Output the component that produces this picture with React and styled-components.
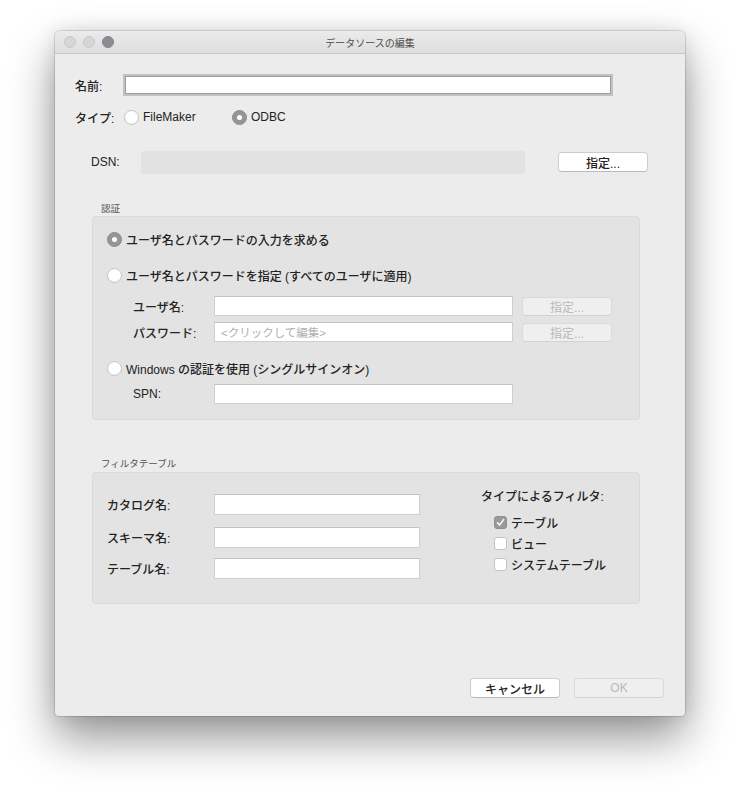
import React from 'react'
import styled, { createGlobalStyle, css } from 'styled-components'

const GlobalStyle = createGlobalStyle`
  html, body {
    margin: 0;
    background: #fff;
  }
  body {
    font-family: "Liberation Sans", "Noto Sans CJK JP", sans-serif;
    font-size: 12px;
    font-weight: 500;
    color: #222;
  }
`

const Page = styled.div`
  display: flex;
  justify-content: center;
  padding-top: 31px;
  height: 765px;
`
const Window = styled.div`
  width: 630px;
  height: 685px;
  display: flex;
  flex-direction: column;
  background: #ececec;
  border-radius: 5px 5px 4px 4px;
  box-shadow: 0 22px 46px rgba(0, 0, 0, 0.42), 0 0 0 1px rgba(0, 0, 0, 0.12), 0 0 18px rgba(0, 0, 0, 0.1);
  overflow: hidden;
`
const TitleBar = styled.div`
  height: 22px;
  flex: none;
  display: flex;
  align-items: center;
  position: relative;
  background: linear-gradient(#ebebeb, #dedede);
  border-bottom: 1px solid #c9c9c9;
`
const Lights = styled.div`
  display: flex;
  gap: 7px;
  padding-left: 9px;
`
const Light = styled.span`
  width: 12px;
  height: 12px;
  border-radius: 50%;
  box-sizing: border-box;
  background: ${p => (p.$dark ? '#8d8d91' : '#d6d6d6')};
  border: 1px solid ${p => (p.$dark ? '#85858a' : '#c8c8c8')};
`
const Title = styled.div`
  position: absolute;
  left: 0;
  right: 0;
  text-align: center;
  font-size: 10px;
  font-weight: 400;
  color: #4d4d4d;
  pointer-events: none;
`
const Body = styled.div`
  flex: 1;
  display: flex;
  flex-direction: column;
  padding: 20px 21px 18px 20px;
`
const Row = styled.div`
  display: flex;
  align-items: center;
  height: ${p => p.$h || 20}px;
  margin-top: ${p => p.$mt || 0}px;
  padding-left: ${p => p.$indent || 0}px;
  flex: none;
`
const Label = styled.span`
  width: ${p => p.$w}px;
  flex: none;
  white-space: nowrap;
`
const TextField = styled.div`
  box-sizing: border-box;
  flex: none;
  width: ${p => p.$w}px;
  height: ${p => p.$h || 20}px;
  background: #fff;
  border: 1px solid #cfcfcf;
  border-top-color: #c2c2c2;
  padding-left: 6px;
  display: flex;
  align-items: center;
  color: #b0b0b0;
  font-size: 11.5px;
  font-weight: 400;
  ${p => p.$focused && css`
    border: 1px solid #9d9d9d;
    box-shadow: 0 0 0 2px #c2c2c2;
    margin-left: 2px;
  `}
  ${p => p.$disabled && css`
    background: #e2e2e2;
    border: none;
    border-radius: 3px;
  `}
`
const Button = styled.div`
  box-sizing: border-box;
  flex: none;
  width: 90px;
  height: ${p => p.$h || 20}px;
  margin-left: ${p => p.$ml || 0}px;
  display: flex;
  align-items: center;
  justify-content: center;
  border-radius: 4px;
  background: ${p => (p.$disabled ? '#efefef' : '#fff')};
  border: 1px solid ${p => (p.$disabled ? '#dadada' : '#cdcdcd')};
  border-bottom-color: ${p => (p.$disabled ? '#d2d2d2' : '#b9b9b9')};
  color: ${p => (p.$disabled ? '#b9b9b9' : '#222')};
  font-size: 12px;
  font-weight: ${p => (p.$disabled ? 400 : 500)};
`
const Option = styled.label`
  display: flex;
  align-items: center;
  gap: 4px;
  width: ${p => (p.$w ? `${p.$w}px` : 'auto')};
  white-space: nowrap;
`
const Radio = styled.span`
  width: 15px;
  height: 15px;
  box-sizing: border-box;
  border-radius: 50%;
  flex: none;
  display: flex;
  align-items: center;
  justify-content: center;
  background: ${p => (p.$checked ? '#959595' : '#fff')};
  border: 1px solid ${p => (p.$checked ? '#8c8c8c' : '#c3c3c3')};
  box-shadow: ${p => (p.$checked ? 'none' : 'inset 0 -1px 1px rgba(0,0,0,0.04)')};
  &::after {
    content: '';
    width: 5px;
    height: 5px;
    border-radius: 50%;
    background: #fff;
    display: ${p => (p.$checked ? 'block' : 'none')};
  }
`
const Check = styled.span`
  width: 13px;
  height: 13px;
  box-sizing: border-box;
  border-radius: 3px;
  flex: none;
  display: flex;
  align-items: center;
  justify-content: center;
  background: ${p => (p.$checked ? '#9a9a9a' : '#fff')};
  border: 1px solid ${p => (p.$checked ? '#8f8f8f' : '#c3c3c3')};
`
const GroupTitle = styled.div`
  font-size: 9.5px;
  font-weight: 400;
  line-height: 12px;
  color: #505050;
  padding-left: 26px;
  margin-top: ${p => p.$mt}px;
`
const GroupBox = styled.div`
  margin: ${p => p.$mt || 1}px 0 0 17px;
  width: 548px;
  box-sizing: border-box;
  background: #e3e3e3;
  border: 1px solid #dadada;
  border-radius: 4px;
  padding: ${p => p.$pad};
  display: flex;
  flex-direction: ${p => p.$dir || 'column'};
`
const Column = styled.div`
  display: flex;
  flex-direction: column;
  margin-left: ${p => p.$ml || 0}px;
  margin-top: ${p => p.$mt || 0}px;
`
const FilterTitle = styled.div`
  line-height: 14px;
  height: 14px;
  margin-bottom: 8px;
`
const Footer = styled.div`
  margin-top: auto;
  display: flex;
  justify-content: flex-end;
  gap: 14px;
`

const Tick = () => (
  <svg width="9" height="9" viewBox="0 0 9 9">
    <path d="M1.5 4.8 L3.6 7 L7.6 1.6" fill="none" stroke="#fff" strokeWidth="1.5" strokeLinecap="round" strokeLinejoin="round" />
  </svg>
)

const CheckRow = ({ checked, children }) => (
  <Row $h={21} $indent={13}>
    <Option>
      <Check $checked={checked}>{checked && <Tick />}</Check>
      {children}
    </Option>
  </Row>
)

const App = () => (
  <>
    <GlobalStyle />
    <Page>
      <Window>
        <TitleBar>
          <Lights>
            <Light />
            <Light />
            <Light $dark />
          </Lights>
          <Title>データソースの編集</Title>
        </TitleBar>
        <Body>
          <Row $h={22}>
            <Label $w={48}>名前:</Label>
            <TextField $focused $w={486} $h={18} />
          </Row>
          <Row $mt={11}>
            <Label $w={49}>タイプ:</Label>
            <Option $w={108}><Radio />FileMaker</Option>
            <Option><Radio $checked />ODBC</Option>
          </Row>
          <Row $h={24} $mt={23} $indent={16}>
            <Label $w={50}>DSN:</Label>
            <TextField $disabled $w={384} $h={23} />
            <Button $ml={33}>指定...</Button>
          </Row>

          <GroupTitle $mt={29}>認証</GroupTitle>
          <GroupBox $pad="12px 0 15px 14px">
            <Row>
              <Option><Radio $checked />ユーザ名とパスワードの入力を求める</Option>
            </Row>
            <Row $mt={16}>
              <Option><Radio />ユーザ名とパスワードを指定 (すべてのユーザに適用)</Option>
            </Row>
            <Row $mt={11} $indent={26}>
              <Label $w={81}>ユーザ名:</Label>
              <TextField $w={299} />
              <Button $disabled $ml={9} $h={19}>指定...</Button>
            </Row>
            <Row $mt={6} $indent={26}>
              <Label $w={81}>パスワード:</Label>
              <TextField $w={299}>&lt;クリックして編集&gt;</TextField>
              <Button $disabled $ml={9} $h={19}>指定...</Button>
            </Row>
            <Row $mt={16}>
              <Option><Radio />Windows の認証を使用 (シングルサインオン)</Option>
            </Row>
            <Row $mt={6} $indent={26}>
              <Label $w={81}>SPN:</Label>
              <TextField $w={299} />
            </Row>
          </GroupBox>

          <GroupTitle $mt={38}>フィルタテーブル</GroupTitle>
          <GroupBox $mt={2} $dir="row" $pad="21px 0 24px 14px">
            <Column>
              <Row $h={21}>
                <Label $w={107}>カタログ名:</Label>
                <TextField $w={206} $h={21} />
              </Row>
              <Row $h={21} $mt={12}>
                <Label $w={107}>スキーマ名:</Label>
                <TextField $w={206} $h={21} />
              </Row>
              <Row $h={21} $mt={10}>
                <Label $w={107}>テーブル名:</Label>
                <TextField $w={206} $h={21} />
              </Row>
            </Column>
            <Column $ml={61} $mt={-4}>
              <FilterTitle>タイプによるフィルタ:</FilterTitle>
              <CheckRow checked>テーブル</CheckRow>
              <CheckRow>ビュー</CheckRow>
              <CheckRow>システムテーブル</CheckRow>
            </Column>
          </GroupBox>

          <Footer>
            <Button>キャンセル</Button>
            <Button $disabled>OK</Button>
          </Footer>
        </Body>
      </Window>
    </Page>
  </>
)

export default App
